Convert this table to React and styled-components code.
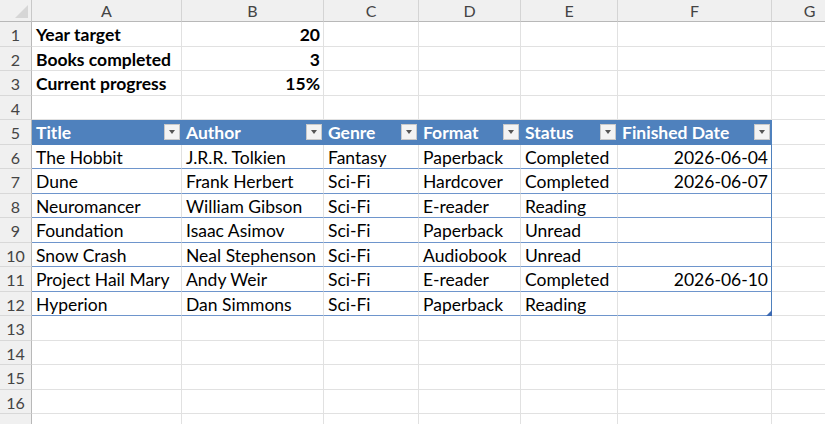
import React from 'react';
import styled, { createGlobalStyle } from 'styled-components';

const GlobalStyle = createGlobalStyle`
  html, body {
    margin: 0;
    padding: 0;
    background: #ffffff;
    overflow: hidden;
  }
`;

const COLS = ['A', 'B', 'C', 'D', 'E', 'F', 'G'];
const WIDTHS = [150, 142, 95, 102, 97, 154, 76];

const books = [
  ['The Hobbit', 'J.R.R. Tolkien', 'Fantasy', 'Paperback', 'Completed', '2026-06-04'],
  ['Dune', 'Frank Herbert', 'Sci-Fi', 'Hardcover', 'Completed', '2026-06-07'],
  ['Neuromancer', 'William Gibson', 'Sci-Fi', 'E-reader', 'Reading', ''],
  ['Foundation', 'Isaac Asimov', 'Sci-Fi', 'Paperback', 'Unread', ''],
  ['Snow Crash', 'Neal Stephenson', 'Sci-Fi', 'Audiobook', 'Unread', ''],
  ['Project Hail Mary', 'Andy Weir', 'Sci-Fi', 'E-reader', 'Completed', '2026-06-10'],
  ['Hyperion', 'Dan Simmons', 'Sci-Fi', 'Paperback', 'Reading', ''],
];

const headers = ['Title', 'Author', 'Genre', 'Format', 'Status', 'Finished Date'];

const Sheet = styled.div`
  display: grid;
  grid-template-columns: 32px ${WIDTHS.map((w) => `${w}px`).join(' ')};
  grid-template-rows: 22px;
  grid-auto-rows: 24.5px;
  font-family: Lato, 'Liberation Sans', sans-serif;
  font-size: 17.5px;
  color: #000;
  width: 848px;
`;

const Corner = styled.div`
  position: relative;
  background: #f0f0f0;
  border-right: 1px solid #c8c8c8;
  border-bottom: 1px solid #b8b8b8;
  &::after {
    content: '';
    position: absolute;
    right: 3px;
    bottom: 3px;
    width: 0;
    height: 0;
    border-left: 13px solid transparent;
    border-bottom: 13px solid #d6d6d6;
  }
`;

const ColHead = styled.div`
  display: flex;
  align-items: center;
  justify-content: center;
  background: #f0f0f0;
  border-right: 1px solid #d4d4d4;
  border-bottom: 1px solid #b8b8b8;
  color: #444;
  font-size: 16px;
  box-sizing: border-box;
`;

const RowHead = styled.div`
  display: flex;
  align-items: center;
  justify-content: center;
  background: #f0f0f0;
  border-right: 1px solid #b8b8b8;
  border-bottom: 1px solid #d8d8d8;
  color: #444;
  font-size: 16px;
  box-sizing: border-box;
  padding-top: 2px;
`;

const Cell = styled.div`
  position: relative;
  display: flex;
  align-items: center;
  justify-content: ${(p) => (p.$right ? 'flex-end' : 'flex-start')};
  padding: 2px 3px 0 4px;
  box-sizing: border-box;
  white-space: nowrap;
  font-weight: ${(p) => (p.$bold ? 700 : 400)};
  border-right: 1px solid ${(p) => (p.$edge ? '#4f81bd' : '#e1e1e1')};
  border-bottom: 1px solid ${(p) => (p.$table ? '#6e95cc' : '#e1e1e1')};
`;

const HeadCell = styled.div`
  display: flex;
  align-items: center;
  justify-content: space-between;
  padding: 2px 2px 0 4px;
  box-sizing: border-box;
  background: #4f81bd;
  color: #ffffff;
  font-weight: 700;
  white-space: nowrap;
  overflow: hidden;
  border-bottom: 1px solid #4f81bd;
`;

const FilterButton = styled.span`
  display: flex;
  flex-shrink: 0;
  align-items: center;
  justify-content: center;
  width: 16px;
  height: 16px;
  box-sizing: border-box;
  background: #f3f3f3;
  border: 1px solid #c9c9c9;
  margin-top: -2px;
  &::after {
    content: '';
    width: 0;
    height: 0;
    border-left: 3.5px solid transparent;
    border-right: 3.5px solid transparent;
    border-top: 4px solid #555;
  }
`;

const ResizeHandle = styled.span`
  position: absolute;
  right: -1px;
  bottom: -1px;
  width: 0;
  height: 0;
  border-left: 6px solid transparent;
  border-bottom: 6px solid #3c6ab3;
`;

const summary = [
  ['Year target', '20'],
  ['Books completed', '3'],
  ['Current progress', '15%'],
];

const App = () => {
  const rows = [];

  // rows 1-3 : summary block
  summary.forEach(([label, value], i) => {
    rows.push(
      <React.Fragment key={`s${i}`}>
        <RowHead>{i + 1}</RowHead>
        <Cell $bold>{label}</Cell>
        <Cell $bold $right>{value}</Cell>
        {COLS.slice(2).map((c) => <Cell key={c} />)}
      </React.Fragment>
    );
  });

  // row 4 : empty
  rows.push(
    <React.Fragment key="r4">
      <RowHead>4</RowHead>
      {COLS.map((c) => <Cell key={c} />)}
    </React.Fragment>
  );

  // row 5 : table header
  rows.push(
    <React.Fragment key="r5">
      <RowHead>5</RowHead>
      {headers.map((h) => (
        <HeadCell key={h}>
          {h}
          <FilterButton />
        </HeadCell>
      ))}
      <Cell />
    </React.Fragment>
  );

  // rows 6-12 : books
  books.forEach((book, r) => {
    const last = r === books.length - 1;
    rows.push(
      <React.Fragment key={`b${r}`}>
        <RowHead>{r + 6}</RowHead>
        {book.map((v, i) => (
          <Cell key={i} $table $edge={i === 5} $right={i === 5}>
            {v}
            {last && i === 5 && <ResizeHandle />}
          </Cell>
        ))}
        <Cell />
      </React.Fragment>
    );
  });

  // rows 13-16 : empty
  for (let n = 13; n <= 16; n++) {
    rows.push(
      <React.Fragment key={`e${n}`}>
        <RowHead>{n}</RowHead>
        {COLS.map((c) => <Cell key={c} />)}
      </React.Fragment>
    );
  }

  return (
    <>
      <GlobalStyle />
      <Sheet>
        <Corner />
        {COLS.map((c) => <ColHead key={c}>{c}</ColHead>)}
        {rows}
        <RowHead />
        {COLS.map((c) => <Cell key={c} />)}
      </Sheet>
    </>
  );
};

export default App;
